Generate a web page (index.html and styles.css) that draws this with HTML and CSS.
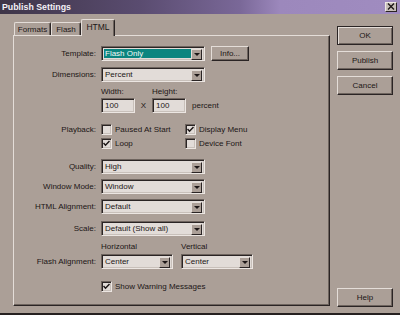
FILE: index.html
```html
<!DOCTYPE html>
<html lang="en">
<head>
<meta charset="UTF-8">
<title>Publish Settings</title>
<link rel="stylesheet" href="styles.css">
</head>
<body>

<div class="dialog">

<div class="titlebar">
  <span>Publish Settings</span>
  <span class="close">
    <svg width="8" height="7" viewBox="0 0 8 7"><path d="M1 0.5 L7 6.5 M7 0.5 L1 6.5" stroke="#1c1616" stroke-width="1.4"/></svg>
  </span>
</div>

<div class="content">

  <div class="main">
    <div class="tabs">
      <div class="tab tab-formats">Formats</div>
      <div class="tab tab-flash">Flash</div>
      <div class="tab tab-html active">HTML</div>
    </div>

    <div class="panel">

      <div class="row r-template">
        <div class="label">Template:</div>
        <div class="select"><span class="value selected">Flash Only</span><span class="arrow"></span></div>
        <div class="button info">Info...</div>
      </div>

      <div class="row r-dims">
        <div class="label">Dimensions:</div>
        <div class="select"><span class="value">Percent</span><span class="arrow"></span></div>
      </div>

      <div class="row r-sizelabels">
        <div class="label"></div>
        <span class="w-label">Width:</span>
        <span>Height:</span>
      </div>

      <div class="row r-size">
        <div class="label"></div>
        <div class="field">100</div>
        <span class="times">X</span>
        <div class="field">100</div>
        <span class="unit">percent</span>
      </div>

      <div class="row r-playback">
        <div class="label">Playback:</div>
        <div class="check first"><span class="box"></span>Paused At Start</div>
        <div class="check"><span class="box"><svg width="7" height="7" viewBox="0 0 7 7"><path d="M0.5 3 L2.5 5.2 L6.5 1" fill="none" stroke="#1c1616" stroke-width="1.5"/></svg></span>Display Menu</div>
      </div>

      <div class="row r-loop">
        <div class="label"></div>
        <div class="check first"><span class="box"><svg width="7" height="7" viewBox="0 0 7 7"><path d="M0.5 3 L2.5 5.2 L6.5 1" fill="none" stroke="#1c1616" stroke-width="1.5"/></svg></span>Loop</div>
        <div class="check"><span class="box"></span>Device Font</div>
      </div>

      <div class="row r-quality">
        <div class="label">Quality:</div>
        <div class="select"><span class="value">High</span><span class="arrow"></span></div>
      </div>

      <div class="row r-window">
        <div class="label">Window Mode:</div>
        <div class="select"><span class="value">Window</span><span class="arrow"></span></div>
      </div>

      <div class="row r-html">
        <div class="label">HTML Alignment:</div>
        <div class="select"><span class="value">Default</span><span class="arrow"></span></div>
      </div>

      <div class="row r-scale">
        <div class="label">Scale:</div>
        <div class="select"><span class="value">Default (Show all)</span><span class="arrow"></span></div>
      </div>

      <div class="row r-alignlabels">
        <div class="label"></div>
        <span class="h-label">Horizontal</span>
        <span>Vertical</span>
      </div>

      <div class="row r-align">
        <div class="label">Flash Alignment:</div>
        <div class="select small"><span class="value">Center</span><span class="arrow"></span></div>
        <div class="select small"><span class="value">Center</span><span class="arrow"></span></div>
      </div>

      <div class="row r-warning">
        <div class="label"></div>
        <div class="check"><span class="box"><svg width="7" height="7" viewBox="0 0 7 7"><path d="M0.5 3 L2.5 5.2 L6.5 1" fill="none" stroke="#1c1616" stroke-width="1.5"/></svg></span>Show Warning Messages</div>
      </div>

    </div>
  </div>

  <div class="side">
    <div class="button default">OK</div>
    <div class="button">Publish</div>
    <div class="button">Cancel</div>
    <div class="button help">Help</div>
  </div>

</div>

</div>

</body>
</html>
```

FILE: styles.css
```css
body {
    margin: 0;
    background-color: #ab9f97;
    font-family: "Liberation Sans", Arial, sans-serif;
    font-size: 8px;
    color: #1c1616;
}
.dialog {
    width: 400px;
    height: 315px;
    box-sizing: border-box;
    border-bottom: 2px solid #262020;
    display: flex;
    flex-direction: column;
}
.titlebar {
    height: 14px;
    flex: none;
    display: flex;
    align-items: center;
    justify-content: space-between;
    padding: 0 3px 1px 2px;
    box-sizing: border-box;
    background: linear-gradient(90deg, #3e3548 0%, #5a4c70 35%, #7a6898 60%, #9c88bc 70%, #a08cc0 100%);
    color: #f4f0f6;
    font-weight: bold;
    font-size: 8.8px;
}
.close {
    width: 12px;
    height: 10px;
    box-sizing: border-box;
    display: flex;
    align-items: center;
    justify-content: center;
    background-color: #c8c0ba;
    border: 1px solid;
    border-color: #eee8e4 #2a2424 #2a2424 #eee8e4;
}
.content {
    flex: 1;
    display: flex;
    padding: 5px 0 0 13px;
}
.main {
    width: 317px;
    display: flex;
    flex-direction: column;
    padding-bottom: 7px;
}
.tabs {
    display: flex;
    align-items: flex-end;
    height: 16px;
    padding-left: 1px;
}
.tab {
    height: 13px;
    box-sizing: border-box;
    display: flex;
    align-items: center;
    justify-content: center;
    border: 1px solid;
    border-bottom: none;
    border-color: #e4ddd8 #2a2424 #2a2424 #e4ddd8;
    border-radius: 2px 2px 0 0;
    box-shadow: inset -1px 0 #6e645e;
}
.tab-formats {
    width: 37px;
}
.tab-flash {
    width: 30px;
}
.tab.active {
    width: 34px;
    height: 17px;
    margin-bottom: -1px;
    padding-bottom: 2px;
    background-color: #ab9f97;
    position: relative;
    z-index: 1;
    font-size: 8.5px;
}
.panel {
    flex: 1;
    border: 1px solid;
    border-color: #e4ddd8 #2a2424 #2a2424 #e4ddd8;
    box-shadow: inset -1px -1px #6e645e;
}
.row {
    display: flex;
    align-items: center;
}
.label {
    width: 82px;
    margin-right: 5px;
    text-align: right;
    flex: none;
}
.select {
    width: 104px;
    height: 15px;
    box-sizing: border-box;
    padding: 2px;
    display: flex;
    background-color: #e2dcd8;
    border: 1px solid;
    border-color: #6e645e #ece6e2 #ece6e2 #6e645e;
    box-shadow: inset 1px 1px #2a2424, inset -1px -1px #c8c0ba;
}
.select.small {
    width: 72px;
    margin-right: 8px;
}
.value {
    flex: 1;
    display: flex;
    align-items: center;
    padding-left: 1px;
    line-height: 11px;
    white-space: nowrap;
    overflow: hidden;
}
.value.selected {
    background-color: #0b857f;
    color: #f2f8f6;
    margin-right: 0;
}
.arrow {
    width: 11px;
    height: 11px;
    flex: none;
    box-sizing: border-box;
    display: flex;
    align-items: center;
    justify-content: center;
    background-color: #ab9f97;
    border: 1px solid;
    border-color: #e4ddd8 #2a2424 #2a2424 #e4ddd8;
}
.arrow::after {
    content: "";
    border-left: 3px solid transparent;
    border-right: 3px solid transparent;
    border-top: 3px solid #1c1616;
}
.button {
    height: 19px;
    box-sizing: border-box;
    display: flex;
    align-items: center;
    justify-content: center;
    border: 1px solid;
    border-color: #e4ddd8 #2a2424 #2a2424 #e4ddd8;
    box-shadow: inset -1px -1px #6e645e;
}
.button.default {
    border-color: #2a2424;
    box-shadow: inset 1px 1px #e4ddd8, inset -1px -1px #6e645e;
}
.button.info {
    width: 38px;
    height: 15px;
    margin-left: 6px;
}
.field {
    width: 34px;
    height: 15px;
    box-sizing: border-box;
    padding-left: 3px;
    display: flex;
    align-items: center;
    background-color: #e2dcd8;
    border: 1px solid;
    border-color: #6e645e #ece6e2 #ece6e2 #6e645e;
    box-shadow: inset 1px 1px #2a2424, inset -1px -1px #c8c0ba;
}
.times {
    width: 17px;
    text-align: center;
}
.unit {
    margin-left: 6px;
}
.w-label {
    width: 51px;
}
.h-label {
    width: 80px;
}
.check {
    display: flex;
    align-items: center;
    white-space: nowrap;
}
.check.first {
    width: 84px;
}
.box {
    width: 11px;
    height: 11px;
    box-sizing: border-box;
    margin-right: 3px;
    flex: none;
    display: flex;
    align-items: center;
    justify-content: center;
    background-color: #e2dcd8;
    border: 1px solid;
    border-color: #6e645e #ece6e2 #ece6e2 #6e645e;
    box-shadow: inset 1px 1px #2a2424, inset -1px -1px #c8c0ba;
}
.r-template { height: 15px; margin-top: 10px; }
.r-dims { height: 15px; margin-top: 6px; }
.r-sizelabels { height: 11px; margin-top: 4px; }
.r-size { height: 15px; margin-top: 1px; }
.r-playback { height: 11px; margin-top: 11px; }
.r-loop { height: 11px; margin-top: 3px; }
.r-quality { height: 15px; margin-top: 10px; }
.r-window { height: 15px; margin-top: 5px; }
.r-html { height: 15px; margin-top: 5px; }
.r-scale { height: 15px; margin-top: 7px; }
.r-alignlabels { height: 10px; margin-top: 5px; }
.r-align { height: 15px; margin-top: 3px; }
.r-warning { height: 11px; margin-top: 12px; }
.side {
    width: 56px;
    margin-left: 7px;
    display: flex;
    flex-direction: column;
    gap: 6px;
    padding: 7px 0 6px;
}
.button.help {
    margin-top: auto;
}
```
